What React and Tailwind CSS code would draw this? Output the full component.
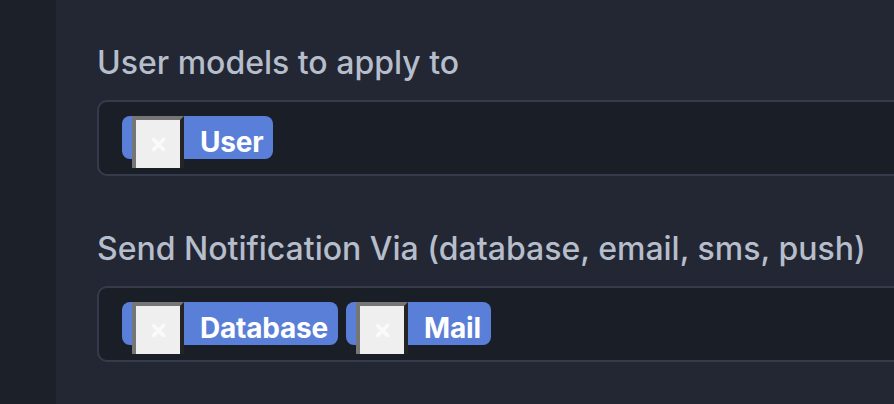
const RemoveButton = () => (
  <button
    type="button"
    className="flex h-[52px] w-[52px] shrink-0 items-center justify-center border-t-4 border-l-4 border-r-4 border-b-0 border-t-[#767676] border-l-[#767676] border-r-[#242424] bg-[#efefef]"
  >
    <svg width="15" height="15" viewBox="0 0 15 15">
      <path
        d="M2.5 2.5 L12.5 12.5 M12.5 2.5 L2.5 12.5"
        stroke="#fafafa"
        strokeWidth="3.6"
        strokeLinecap="round"
      />
    </svg>
  </button>
);

const Tag = ({ label }) => (
  <div className="flex h-[43px] items-start rounded-[8px] bg-[#5a7fd8] pl-[10px] pr-[10px]">
    <RemoveButton />
    <span className="ml-[16px] mt-[12px] text-[28px] font-bold leading-[28px] tracking-[-0.2px] text-white">
      {label}
    </span>
  </div>
);

const Field = ({ label, tags }) => (
  <div className="flex flex-col">
    <label className="text-[32px] font-medium leading-[40px] text-[#b6bdcb]">
      {label}
    </label>
    <div className="mt-[17px] h-[76px] w-[900px] rounded-[10px] border-2 border-[#353b4a] bg-[#1a1e27] pl-[23px] pt-[14px]">
      <div className="flex gap-[8px]">
        {tags.map((t) => (
          <Tag key={t} label={t} />
        ))}
      </div>
    </div>
  </div>
);

export default function App() {
  return (
    <div
      className="flex h-[404px] w-full overflow-hidden bg-[#222733]"
      style={{ fontFamily: "Inter, 'Noto Sans', sans-serif" }}
    >
      <aside className="h-full w-[56px] shrink-0 bg-[#1c2029]" />
      <main className="flex flex-col gap-[53px] pl-[41px] pt-[43px]">
        <Field label="User models to apply to" tags={["User"]} />
        <Field
          label="Send Notification Via (database, email, sms, push)"
          tags={["Database", "Mail"]}
        />
      </main>
    </div>
  );
}
